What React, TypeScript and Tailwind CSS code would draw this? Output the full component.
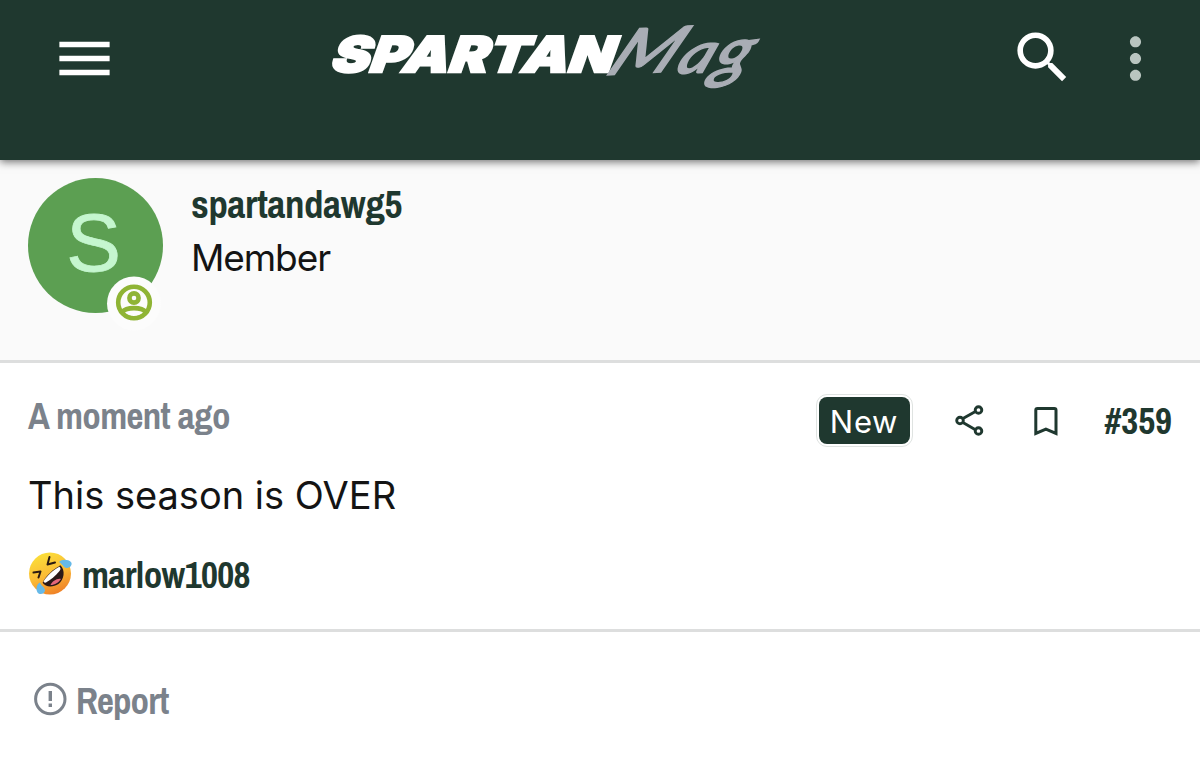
import { MdMenu, MdMoreVert, MdSearch } from 'react-icons/md';

const NARROW = "font-['Liberation_Sans_Narrow','Archivo_Narrow','Liberation_Sans',sans-serif] font-bold";
const SANS = "font-[Inter,'Liberation_Sans',sans-serif]";

function Logo() {
  return (
    <svg width="460" height="100" viewBox="328 8 460 100" overflow="visible" role="img" aria-label="SpartanMag">
      <text
        transform="translate(331 71.800) skewX(-9)"
        textLength="282"
        lengthAdjust="spacingAndGlyphs"
        className="fill-white stroke-white stroke-[2.5] font-[Inter,sans-serif] text-[49px] font-black italic"
      >
        SPARTAN
      </text>
      <g className="fill-[#a9adb5] stroke-[#a9adb5] stroke-[1.5] font-[Lato,sans-serif] font-medium italic">
        <text
          transform="translate(604 75) rotate(-3) skewX(-32)"
          textLength="66"
          lengthAdjust="spacingAndGlyphs"
          className="text-[62px]"
        >
          M
        </text>
        <text
          transform="translate(674 74) rotate(-3) skewX(-26)"
          textLength="35"
          lengthAdjust="spacingAndGlyphs"
          className="text-[56px]"
        >
          a
        </text>
        <text
          transform="translate(709 77) rotate(-8) skewX(-28)"
          textLength="38"
          lengthAdjust="spacingAndGlyphs"
          className="text-[62px]"
        >
          g
        </text>
      </g>
    </svg>
  );
}

function Header() {
  return (
    <header className="relative z-10 flex h-40 items-start bg-[#1f382f] pt-[25px] shadow-[0_2px_8px_rgba(0,0,0,0.55)]">
      <button className="ml-[50.5px] text-white" aria-label="Menu">
        <MdMenu size={67} />
      </button>
      <div className="-mt-[17px] ml-[210.5px]">
        <Logo />
      </div>
      <button className="-mt-[1px] ml-[221px] text-white" aria-label="Search">
        <MdSearch size={67} />
      </button>
      <button className="ml-[26px] text-[#b9c5c0]" aria-label="More">
        <MdMoreVert size={67} />
      </button>
    </header>
  );
}

function Avatar() {
  return (
    <div className="relative h-[135px] w-[135px] shrink-0">
      <div className="flex h-full w-full items-center justify-center rounded-full bg-[#5c9f52] pb-[6px] pr-[4px] font-['Liberation_Sans',sans-serif] text-[82px] leading-none text-[#c5f6cf] [-webkit-text-stroke:0.8px_#c5f6cf]">
        S
      </div>
      <svg className="absolute left-[78px] top-[97px]" width="56" height="56" viewBox="0 0 56 56" fill="none">
        <circle cx="28" cy="28.500" r="27" fill="#fcfcfc" />
        <g stroke="#8fb435" strokeWidth="4.600">
          <circle cx="28" cy="27.500" r="15.800" />
          <circle cx="28" cy="23" r="4.600" />
          <path d="M16.500 37C20 31.800 36 31.800 39.500 37" />
          <path d="M19 39.500C23 43 33 43 37 39.500" strokeWidth="2" />
        </g>
      </svg>
    </div>
  );
}

function ShareIcon() {
  return (
    <svg width="30" height="32" viewBox="0 0 30 32" fill="none" stroke="#1f382f" strokeWidth="2.900">
      <path d="M7.500 13.800L20 6.700M7.500 17.200L20 24.500" />
      <circle cx="5" cy="15.500" r="3.300" />
      <circle cx="23.500" cy="5" r="3.300" />
      <circle cx="23.500" cy="26" r="3.300" />
    </svg>
  );
}

function BookmarkIcon() {
  return (
    <svg width="24" height="32" viewBox="0 0 24 32" fill="none" stroke="#1f382f" strokeWidth="3">
      <path d="M1.800 28.500V5.200Q1.800 3.500 3.500 3.500H20.300Q22 3.500 22 5.200V28.500L11.900 24.100Z" />
    </svg>
  );
}

function RoflIcon() {
  return (
    <svg width="44" height="44" viewBox="0 0 44 44" className="relative -top-[2px]">
      <defs>
        <linearGradient id="face" x1="0.2" y1="0" x2="0.6" y2="1">
          <stop offset="0" stopColor="#fbe23a" />
          <stop offset="0.55" stopColor="#fbbb35" />
          <stop offset="1" stopColor="#ef8127" />
        </linearGradient>
      </defs>
      <circle cx="22" cy="22.500" r="21" fill="url(#face)" />
      <g fill="none" stroke="#2b1b12" strokeWidth="2" strokeLinecap="round" strokeLinejoin="round">
        <path d="M21.500 6L19.500 13.500L27 11.500" />
        <path d="M5.500 21.500L12.500 20.500L10.500 26.500" />
      </g>
      <path d="M14.500 31.500C21 29 29.500 22.500 32 14C38 19 36 29 30.500 33C25 36.500 17.500 36.500 14.500 31.500Z" fill="#2b1918" />
      <path d="M15 31C17 26 26 17 32 15Q34 19 32 21.500C28 26.500 23 30.500 18.500 33Q16 33.500 15 31Z" fill="#2b1918" />
      <path d="M15.500 30.500C18 26 26.500 17.500 31.500 15.800Q33.500 17.500 31.500 20C27.500 25 22.500 29 18 31.500Q16 32 15.500 30.500Z" fill="#fff" />
      <path d="M22.500 34C24 30.500 29 27 33 28C30.500 31.500 27 34 22.500 34Z" fill="#e5677b" />
      <path d="M31 11C34 7.500 40.500 8.500 43 11C45 13.500 42 17.500 38.500 17C35.500 16.500 34.500 13 31 11Z" fill="#66b9e8" />
      <path d="M12 31.500C8.500 33 7.500 38.500 9.500 41.500C12 44.500 17 42.500 17 39.500C17 36 13 35 12 31.500Z" fill="#66b9e8" />
    </svg>
  );
}

function ReportIcon() {
  return (
    <svg width="34" height="34" viewBox="0 0 34 34" fill="none" stroke="#7b828b" strokeWidth="3" className="-mt-[4px]">
      <circle cx="17.300" cy="17" r="14.700" />
      <path d="M17.300 9V19M17.300 21.500V25" strokeWidth="3.400" />
    </svg>
  );
}

export default function App() {
  return (
    <div className="h-[766px] w-[1200px] overflow-hidden bg-white">
      <Header />

      <section className="flex h-[203px] border-b-[3px] border-[#dddede] bg-[#fafafa] pl-7 pt-[18px]">
        <Avatar />
        <div className="ml-7 pt-[4px]">
          <div className={`${NARROW} text-[39px] leading-[44px] tracking-[-0.35px] text-[#1f382f]`}>spartandawg5</div>
          <div className={`${SANS} pt-[9px] text-[37px] leading-[46px] tracking-[-1.1px] text-[#141414]`}>Member</div>
        </div>
      </section>

      <article className="h-[269px] border-b-[3px] border-[#dddede] px-7 pt-[31px]">
        <div className="flex h-[54px] items-start justify-between">
          <time className={`${NARROW} text-[37px] leading-[44px] tracking-[-0.65px] text-[#7b828b]`}>A moment ago</time>
          <div className="flex items-center">
            <div className="rounded-[11px] border border-[#dfe3e1] p-[2px]">
              <div
                className={`${SANS} flex h-[47px] w-[91px] items-center justify-center rounded-[8px] bg-[#1f382f] pt-[3px] text-[31px] tracking-[0.7px] text-white`}
              >
                New
              </div>
            </div>
            <button className="ml-[42px]" aria-label="Share">
              <ShareIcon />
            </button>
            <button className="ml-[49px]" aria-label="Bookmark">
              <BookmarkIcon />
            </button>
            <span className={`${NARROW} ml-[47px] text-[37px] leading-[44px] text-[#1f382f]`}>#359</span>
          </div>
        </div>

        <p className={`${SANS} pt-[23px] text-[38px] leading-[48px] text-[#141414]`}>This season is OVER</p>

        <div className="mt-[34px] flex items-center">
          <RoflIcon />
          <span className={`${NARROW} ml-[10px] text-[37px] leading-[44px] tracking-[-0.6px] text-[#1f382f]`}>marlow1008</span>
        </div>
      </article>

      <footer className="flex items-center pl-[33px] pt-[47px]">
        <ReportIcon />
        <span className={`${NARROW} ml-[9px] text-[37px] leading-[44px] tracking-[-0.9px] text-[#7b828b]`}>Report</span>
      </footer>
    </div>
  );
}
